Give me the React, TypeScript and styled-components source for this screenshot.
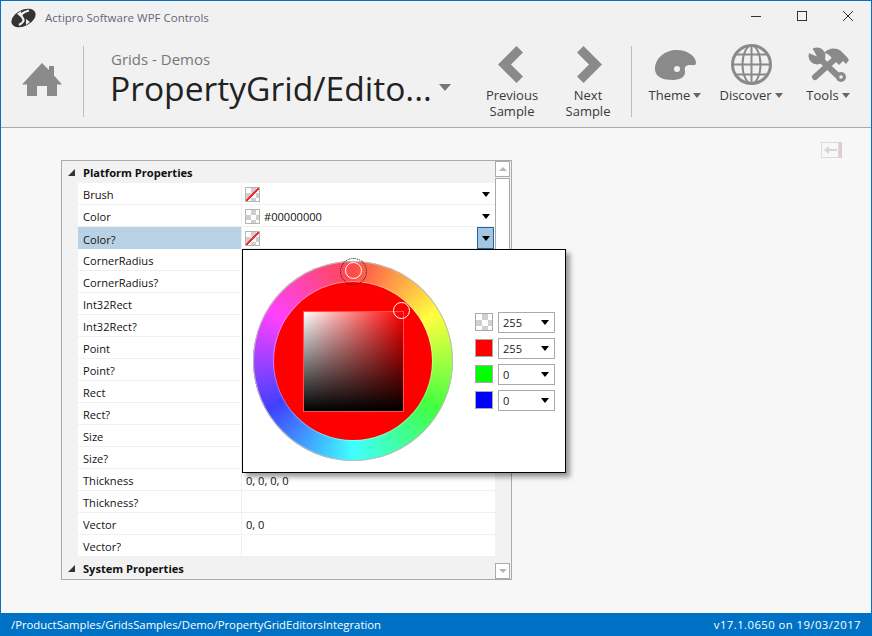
import React from "react";
import styled, { createGlobalStyle } from "styled-components";

const Global = createGlobalStyle`
  html, body { margin: 0; padding: 0; background: #f7f7f7; }
  * { box-sizing: border-box; }
`;

const FONT = `"Open Sans", "Noto Sans", sans-serif`;

const Win = styled.div`
  width: 872px; height: 636px; display: flex; flex-direction: column;
  border: 1px solid #0072c6; border-bottom: 0; background: #f7f7f7;
  font-family: ${FONT}; font-size: 11.1px; color: #111; overflow: hidden;
`;
const TitleBar = styled.div`
  height: 35px; flex: none; display: flex; align-items: center; background: #f1f1f1; padding: 0 0 2px 10px;
`;
const TitleText = styled.span`
  margin-left: 9px; font-size: 11.5px; color: #66667a;
`;
const WinButtons = styled.div`
  margin-left: auto; margin-bottom: 3px; display: flex; align-items: center;
`;
const WinBtn = styled.div`
  width: 46px; height: 30px; display: flex; align-items: center; justify-content: center; color: #333;
`;
const Ribbon = styled.div`
  height: 92px; flex: none; display: flex; align-items: stretch; padding: 10px 0; background: #f1f1f1;
  border-bottom: 1px solid #aaa;
`;
const Sep = styled.div`
  width: 1px; flex: none; background: #bcbcbc;
`;
const HomeBtn = styled.div`
  width: 82px; flex: none; display: flex; align-items: center; justify-content: center; padding: 0 1px 5px 0;
`;
const Crumb = styled.div`
  width: 390px; flex: none; padding-left: 26px; display: flex; flex-direction: column;
`;
const CrumbSmall = styled.div`
  font-size: 15px; line-height: 19px; color: #777; margin: 4px 0 0 1px;
`;
const CrumbBig = styled.div`
  display: flex; align-items: center; font-size: 33.6px; line-height: 40px; color: #222; white-space: nowrap; margin-top: -1px;
`;
const BigCaret = styled.span`
  width: 0; height: 0; border-left: 6.5px solid transparent; border-right: 6.5px solid transparent;
  border-top: 7px solid #777; margin-left: 7px; margin-top: -2px;
`;
const RibbonBtn = styled.div<{ $w: number }>`
  width: ${(p) => p.$w}px; flex: none; display: flex; flex-direction: column; align-items: center;
`;
const IconSlot = styled.div<{ $l?: number; $r?: number }>`
  height: 37px; display: flex; align-items: center; justify-content: center;
  padding: 0 ${(p) => p.$r ?? 0}px 0 ${(p) => p.$l ?? 0}px;
`;
const RibbonLabel = styled.div`
  font-size: 13px; line-height: 16px; text-align: center; color: #3a3a3a; white-space: nowrap;
  display: flex; flex-direction: column; align-items: center; margin-top: 4px;
`;
const LabelRow = styled.span`
  display: flex; align-items: center; gap: 3px; height: 16px;
`;
const SmallCaret = styled.span`
  width: 0; height: 0; border-left: 4.5px solid transparent; border-right: 4.5px solid transparent;
  border-top: 5px solid #666; margin-top: 1px;
`;
const Spacer = styled.div<{ $w: number }>`
  width: ${(p) => p.$w}px; flex: none;
`;
const Content = styled.div`
  flex: 1; position: relative; padding: 32px 0 0 60px; background: #f7f7f7;
`;
const PinIcon = styled.div`
  position: absolute; right: 28px; top: 14px; display: flex;
`;
const Panel = styled.div`
  position: relative; width: 451px; height: 420px; border: 1px solid #aaa; display: flex; background: #f2f2f2;
`;
const List = styled.div`
  width: 433px; flex: none; display: flex; flex-direction: column;
`;
const CatRow = styled.div`
  height: 22px; flex: none; display: flex; align-items: center; font-weight: 700; color: #111;
  background: #f2f2f2;
`;
const Expander = styled.span`
  width: 21px; flex: none; display: flex; justify-content: flex-start; padding-left: 5px; align-self: center;
`;
const Row = styled.div`
  height: 22px; flex: none; display: flex; margin-left: 16px; background: #fff; border-bottom: 1px solid #f0f0f0;
`;
const NameCell = styled.div<{ $sel?: boolean }>`
  width: 163px; flex: none; display: flex; align-items: center; padding: 2px 0 0 5px;
  background: ${(p) => (p.$sel ? "#b9d1e5" : "#fff")};
  margin-bottom: ${(p) => (p.$sel ? "-1px" : "0")};
`;
const ValueCell = styled.div`
  flex: 1; display: flex; align-items: center; padding: 2px 0 0 4px; border-left: 1px solid #f0f0f0; position: relative; gap: 4px;
`;
const Swatch = styled.span<{ $null?: boolean }>`
  width: 15px; height: 15px; flex: none; margin-left: -1px; border: 1px solid #b5b5b5;
  background:
    ${(p) => (p.$null ? "linear-gradient(to bottom right, transparent 46%, #f03030 46%, #f03030 54%, transparent 54%)," : "")}
    repeating-conic-gradient(#cfcfcf 0 25%, #fff 0 50%) 0 0 / 10px 10px;
`;
const Caret = styled.span`
  width: 0; height: 0; border-left: 4px solid transparent; border-right: 4px solid transparent; border-top: 5px solid #000;
`;
const CaretSlot = styled.span<{ $active?: boolean }>`
  position: absolute; right: 1px; top: 0; bottom: ${(p) => (p.$active ? "-1px" : "0")}; width: 17px; padding-top: 1px;
  display: flex; align-items: center; justify-content: center;
  ${(p) => (p.$active ? "background:#a5c6e1;border:1px solid #1a66a8;" : "")}
`;
const ScrollBar = styled.div`
  flex: 1; display: flex; flex-direction: column; padding: 0 1px 0 0; background: #f2f2f2;
`;
const ScrollBtn = styled.div`
  height: 16px; flex: none; border: 1px solid #aaa; background: #fff; display: flex; align-items: center; justify-content: center;
`;
const ScrollThumb = styled.div`
  height: 294px; flex: none; border: 1px solid #aaa; background: #fff; margin-top: 1px;
`;
const ScrollFill = styled.div`
  flex: 1;
`;
const UpTri = styled.span`
  width: 0; height: 0; border-left: 4px solid transparent; border-right: 4px solid transparent; border-bottom: 4px solid #b5b5b5;
`;
const DownTri = styled.span`
  width: 0; height: 0; border-left: 4px solid transparent; border-right: 4px solid transparent; border-top: 4px solid #b5b5b5;
`;
const Popup = styled.div`
  position: absolute; left: 180px; top: 87px; margin-top: 1px; width: 324px; height: 224px; background: #fff;
  border: 1px solid #000; box-shadow: 4px 4px 5px rgba(0,0,0,0.4); display: flex; align-items: center; padding-left: 10px;
`;
const Wheel = styled.div`
  position: relative; width: 200px; height: 200px; border-radius: 50%; flex: none; display: flex; align-items: center; justify-content: center;
  background: conic-gradient(#ff4a4a, #ffff40 60deg, #40ff40 120deg, #40ffff 180deg, #4040ff 240deg, #ff40ff 300deg, #ff4a4a);
  box-shadow: inset 0 0 0 1px #bbb;
`;
const Disc = styled.div`
  width: 158px; height: 158px; border-radius: 50%; background: #ff0000; display: flex; align-items: center; justify-content: center;
  box-shadow: 0 0 0 1px rgba(255,255,255,0.35);
`;
const Square = styled.div`
  width: 101px; height: 101px; margin: 1px 0 0 1px; border: 1px solid #ff5050;
  background: linear-gradient(to bottom, transparent, #000), linear-gradient(to right, #fff, #f00);
`;
const Cursor = styled.div`
  position: absolute; border-radius: 50%; border: 1px solid #fff;
`;
const HueCursor = styled(Cursor)`
  left: 92px; top: 1px; width: 17px; height: 17px;
`;
const HueRing = styled.div`
  position: absolute; left: 87px; top: -3px; width: 27px; height: 27px; border-radius: 50%; border: 1px dotted #222;
`;
const SvCursor = styled(Cursor)`
  left: 140px; top: 41px; width: 17px; height: 17px;
`;
const Channels = styled.div`
  margin-left: 22px; display: flex; flex-direction: column; gap: 5px;
`;
const Channel = styled.div`
  display: flex; align-items: center; gap: 5px; height: 21px;
`;
const ChannelSwatch = styled.span<{ $c?: string }>`
  width: 18px; height: 18px; flex: none; border: 1px solid #aaa;
  background: ${(p) => p.$c ?? "repeating-conic-gradient(#cfcfcf 0 25%, #fff 0 50%) 0 0 / 12px 12px"};
`;
const Combo = styled.div`
  width: 57px; height: 21px; border: 1px solid #aaa; background: #fff; display: flex; align-items: center; justify-content: space-between;
  padding: 0 5px 0 4px; color: #222;
`;
const Status = styled.div`
  height: 23px; flex: none; margin: 0 -1px; background: #0072c6; color: #fff; display: flex; align-items: center; justify-content: space-between;
  padding: 0 11px; font-size: 11.3px;
`;
const Version = styled.span`
  letter-spacing: 0.45px;
`;

const Logo = () => (
  <svg width="25" height="22" viewBox="0 0 25 22">
    <ellipse cx="12.500" cy="11" rx="13" ry="8" transform="rotate(-28 12.500 11)" fill="#333" />
    <path d="M18 3.500C12 5 9 7.500 11 10c2 2.500 3 4.500-3 8" fill="none" stroke="#f1f1f1" strokeWidth="2.200" />
    <path d="M6 7l4-3 0 6zM19 15l-4 3 0-6z" fill="#f1f1f1" />
  </svg>
);
const Home = () => (
  <svg width="40" height="33" viewBox="0 0 40 33">
    <path fill="#8a8a8a" d="M0 21.500 20 0l7 7V3h5v9.500l8 9h-5V33H25V23H15v10H5V21.500z" />
  </svg>
);
const Chevron = ({ flip }: { flip?: boolean }) => (
  <svg width="25" height="37" viewBox="0 0 25 37">
    <path fill="#8a8a8a" transform={flip ? "matrix(-1 0 0 1 25 0)" : undefined} d="M0 18.500 18.500 0 25 6.500 13 18.500 25 30.500 18.500 37z" />
  </svg>
);
const Palette = () => (
  <svg width="41" height="30" viewBox="0 0 41 30">
    <path fill="#8a8a8a" fillRule="evenodd" d="M0 19C0 8 10 0 22 0c10 0 19 6 19 13 0 3-3 2-6 2-4 0-6 2-5 6 1 5-4 9-12 9C8 30 0 27 0 19zM22 16a3 3 0 1 0 0 6 3 3 0 0 0 0-6z" />
  </svg>
);
const Globe = () => (
  <svg width="41" height="41" viewBox="0 0 41 41" fill="none" stroke="#8a8a8a" strokeWidth="2">
    <circle cx="20.500" cy="20.500" r="19" strokeWidth="3" />
    <ellipse cx="20.500" cy="20.500" rx="9" ry="19" />
    <path d="M20.500 1v39M2 20.500h37M5 10.500h31M5 30.500h31" />
  </svg>
);
const Tools = () => (
  <svg width="41" height="36" viewBox="0 0 41 36" fill="#8a8a8a">
    <path d="M27 12 7 30" stroke="#8a8a8a" strokeWidth="6" strokeLinecap="round" />
    <path d="M16 6C20 1 28 0 33 4l6 6 2 3-3 4-3-3-4 4-9-9c-2-2-4-3-6-3z" />
    <path d="M9 9 31 30" stroke="#8a8a8a" strokeWidth="6" />
    <circle cx="9" cy="9" r="8.500" />
    <path d="M9 9.500 3-1-3 4.500z" fill="#f1f1f1" />
    <circle cx="33" cy="30" r="5" />
    <circle cx="33" cy="30" r="1.800" fill="#f1f1f1" />
  </svg>
);
const Pin = () => (
  <svg width="22" height="16" viewBox="0 0 22 16">
    <rect x="0.500" y="0.500" width="17" height="15" fill="none" stroke="#dcdcdc" />
    <path fill="#d0d8dc" d="M3 8l5-4v3h8v2H8v3z" />
    <rect x="18" y="0" width="3" height="16" fill="#e0cccc" />
  </svg>
);
const Tri = () => (
  <svg width="9" height="9" viewBox="0 0 9 9"><path fill="#333" d="M8 1v7H1z" /></svg>
);

const rows: { name: string; val?: string; swatch?: "null" | "check"; caret?: boolean; sel?: boolean }[] = [
  { name: "Brush", swatch: "null", caret: true },
  { name: "Color", swatch: "check", val: "#00000000", caret: true },
  { name: "Color?", swatch: "null", caret: true, sel: true },
  { name: "CornerRadius" }, { name: "CornerRadius?" }, { name: "Int32Rect" }, { name: "Int32Rect?" },
  { name: "Point" }, { name: "Point?" }, { name: "Rect" }, { name: "Rect?" }, { name: "Size" }, { name: "Size?" },
  { name: "Thickness", val: "0, 0, 0, 0" }, { name: "Thickness?" }, { name: "Vector", val: "0, 0" }, { name: "Vector?" },
];
const channels: { c?: string; v: string }[] = [{ v: "255" }, { c: "#ff0000", v: "255" }, { c: "#00ff00", v: "0" }, { c: "#0000ff", v: "0" }];

export default function App() {
  return (
    <Win>
      <Global />
      <TitleBar>
        <Logo />
        <TitleText>Actipro Software WPF Controls</TitleText>
        <WinButtons>
          <WinBtn><svg width="10" height="10"><path d="M0 5.500h10" stroke="#333" /></svg></WinBtn>
          <WinBtn><svg width="10" height="10"><rect x=".5" y=".5" width="9" height="9" fill="none" stroke="#333" /></svg></WinBtn>
          <WinBtn><svg width="10" height="10"><path d="M0 0l10 10M10 0L0 10" stroke="#333" /></svg></WinBtn>
        </WinButtons>
      </TitleBar>
      <Ribbon>
        <HomeBtn><Home /></HomeBtn>
        <Sep />
        <Crumb>
          <CrumbSmall>Grids - Demos</CrumbSmall>
          <CrumbBig>PropertyGrid/Edito...<BigCaret /></CrumbBig>
        </Crumb>
        <RibbonBtn $w={76}>
          <IconSlot $r={3}><Chevron /></IconSlot>
          <RibbonLabel><span>Previous</span><span>Sample</span></RibbonLabel>
        </RibbonBtn>
        <RibbonBtn $w={76}>
          <IconSlot $l={2}><Chevron flip /></IconSlot>
          <RibbonLabel><span>Next</span><span>Sample</span></RibbonLabel>
        </RibbonBtn>
        <Spacer $w={5} />
        <Sep />
        <RibbonBtn $w={86}>
          <IconSlot><Palette /></IconSlot>
          <RibbonLabel><LabelRow>Theme<SmallCaret /></LabelRow></RibbonLabel>
        </RibbonBtn>
        <RibbonBtn $w={66}>
          <IconSlot><Globe /></IconSlot>
          <RibbonLabel><LabelRow>Discover<SmallCaret /></LabelRow></RibbonLabel>
        </RibbonBtn>
        <RibbonBtn $w={88}>
          <IconSlot><Tools /></IconSlot>
          <RibbonLabel><LabelRow>Tools<SmallCaret /></LabelRow></RibbonLabel>
        </RibbonBtn>
      </Ribbon>
      <Content>
        <PinIcon><Pin /></PinIcon>
        <Panel>
          <List>
            <CatRow><Expander><Tri /></Expander>Platform Properties</CatRow>
            {rows.map((r) => (
              <Row key={r.name}>
                <NameCell $sel={r.sel}>{r.name}</NameCell>
                <ValueCell>
                  {r.swatch && <Swatch $null={r.swatch === "null"} />}
                  {r.val}
                  {r.caret && <CaretSlot $active={r.sel}><Caret /></CaretSlot>}
                </ValueCell>
              </Row>
            ))}
            <CatRow><Expander><Tri /></Expander>System Properties</CatRow>
          </List>
          <ScrollBar>
            <ScrollBtn><UpTri /></ScrollBtn>
            <ScrollThumb />
            <ScrollFill />
            <ScrollBtn><DownTri /></ScrollBtn>
          </ScrollBar>
          <Popup>
            <Wheel>
              <Disc><Square /></Disc>
              <HueRing />
              <HueCursor />
              <SvCursor />
            </Wheel>
            <Channels>
              {channels.map((c, i) => (
                <Channel key={i}>
                  <ChannelSwatch $c={c.c} />
                  <Combo>{c.v}<Caret /></Combo>
                </Channel>
              ))}
            </Channels>
          </Popup>
        </Panel>
      </Content>
      <Status>
        <span>/ProductSamples/GridsSamples/Demo/PropertyGridEditorsIntegration</span>
        <Version>v17.1.0650 on 19/03/2017</Version>
      </Status>
    </Win>
  );
}
